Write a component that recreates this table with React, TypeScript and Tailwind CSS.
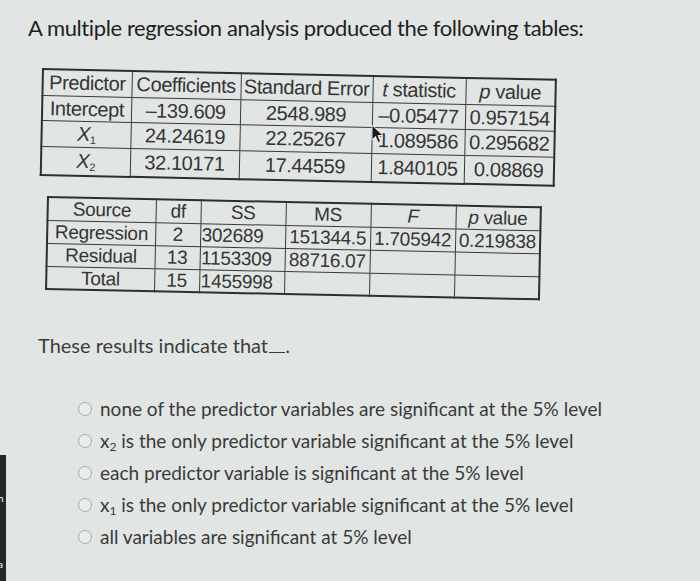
import React from "react";

const cellBase = "border border-[#3a3a3a] text-center leading-none px-[1px]";

function Table1() {
  const cols = ["w-[89px]", "w-[109px]", "w-[132px]", "w-[93px]", "w-[90px]"];
  const rows: React.ReactNode[][] = [
    ["Predictor", "Coefficients", "Standard Error", <span key="t"><i>t</i> statistic</span>, <span key="p"><i>p</i> value</span>],
    ["Intercept", "\u2013139.609", "2548.989", "\u20130.05477", "0.957154"],
    [<span key="x1"><i>X</i><sub className="text-[11px]">1</sub></span>, "24.24619", "22.25267", "1.089586", "0.295682"],
    [<span key="x2"><i>X</i><sub className="text-[11px]">2</sub></span>, "32.10171", "17.44559", "1.840105", "0.08869"],
  ];
  const heights = ["h-[26px]", "h-[25px]", "h-[26px]", "h-[29px]"];
  return (
    <table className="border-collapse border-2 border-[#2e2e2e] rotate-[1.2deg] origin-top-left font-['Liberation_Sans',Arial,sans-serif] text-[20px] text-[#353535] tracking-[-0.4px]">
      <tbody>
        {rows.map((r, i) => (
          <tr key={i} className={heights[i]}>
            {r.map((c, j) => (
              <td key={j} className={`${cellBase} ${cols[j]}`}>{c}</td>
            ))}
          </tr>
        ))}
      </tbody>
    </table>
  );
}

function Table2() {
  const cols = ["w-[108px]", "w-[45px]", "w-[85px]", "w-[85px]", "w-[85px]", "w-[85px]"];
  const rows: React.ReactNode[][] = [
    ["Source", "df", "SS", "MS", <i key="f">F</i>, <span key="p"><i>p</i> value</span>],
    ["Regression", "2", "302689", "151344.5", "1.705942", "0.219838"],
    ["Residual", "13", "1153309", "88716.07", "", ""],
    ["Total", "15", "1455998", "", "", ""],
  ];
  return (
    <table className="border-collapse border-2 border-[#2e2e2e] rotate-[1.2deg] origin-top-left font-['Liberation_Sans',Arial,sans-serif] text-[19px] text-[#353535] tracking-[-0.3px]">
      <tbody>
        {rows.map((r, i) => (
          <tr key={i} className="h-[23px]">
            {r.map((c, j) => (
              <td key={j} className={`${cellBase} ${cols[j]} ${j === 2 && i > 0 ? "text-left" : ""}`}>{c}</td>
            ))}
          </tr>
        ))}
      </tbody>
    </table>
  );
}

function Option({ children }: { children: React.ReactNode }) {
  return (
    <div className="flex items-center h-[32px]">
      <span className="w-[14px] h-[14px] rounded-full border-[1.5px] border-[#a3adb2] bg-[#e9eceb] mr-[8px] shrink-0" />
      <span>{children}</span>
    </div>
  );
}

export default function App() {
  return (
    <div className="relative w-[700px] h-[581px] overflow-hidden bg-[#e1e6e4] font-['Lato','Open_Sans',sans-serif]">
      <div className="pt-[14px] pl-[28px] text-[22px] leading-[28px] text-[#1f1f1f] tracking-[-0.4px]">
        A multiple regression analysis produced the following tables:
      </div>
      <div className="mt-[26px] ml-[42px]">
        <Table1 />
      </div>
      <div className="mt-[20px] ml-[47px]">
        <Table2 />
      </div>
      <div className="mt-[43px] pl-[38px] text-[20px] leading-[24px] text-[#3c3c3c]">
        These results indicate that <span className="inline-block w-[16px] border-b border-[#3c3c3c] -ml-[4px]" />.
      </div>
      <div className="mt-[36px] pl-[78px] text-[19px] text-[#3a3a3a]">
        <Option>none of the predictor variables are significant at the 5% level</Option>
        <Option>x<sub className="text-[12px]">2</sub> is the only predictor variable significant at the 5% level</Option>
        <Option>each predictor variable is significant at the 5% level</Option>
        <Option>x<sub className="text-[12px]">1</sub> is the only predictor variable significant at the 5% level</Option>
        <Option>all variables are significant at 5% level</Option>
      </div>
      <svg className="absolute left-[371px] top-[124px]" width="14" height="20" viewBox="0 0 14 20">
        <path d="M1 1 L1 16 L4.5 12.5 L7 18.5 L9.5 17.5 L7 11.5 L12 11.5 Z" fill="#1a1a1a" stroke="#e8e8e8" strokeWidth="1" />
      </svg>
      <div className="absolute left-0 top-[455px] bottom-0 w-[6px] bg-[#22272b] text-[10px] text-white leading-none overflow-hidden">
        <div className="mt-[38px] -ml-[2px]">n</div>
        <div className="mt-[56px] -ml-[2px]">a</div>
      </div>
    </div>
  );
}
